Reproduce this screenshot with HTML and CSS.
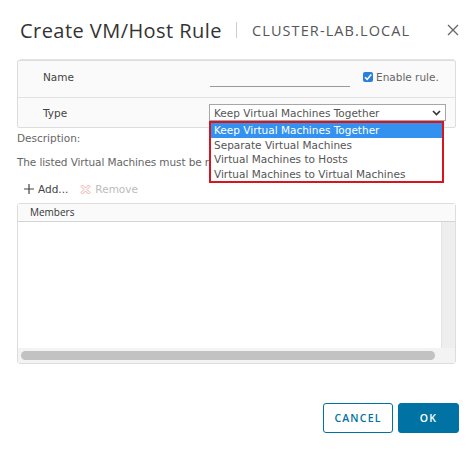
FILE: index.html
```html
<!DOCTYPE html>
<html lang="en">
<head>
  <meta charset="UTF-8">
  <title>Create VM/Host Rule</title>
  <link rel="stylesheet" href="styles.css">
</head>
<body>

<div class="dialog">
  <div class="header">
    <h2 class="title">Create VM/Host Rule</h2>
    <span class="divider"></span>
    <span class="cluster">CLUSTER-LAB.LOCAL</span>
    <svg class="close" width="12" height="12" viewBox="0 0 12 12"><path d="M1 1 L11 11 M11 1 L1 11" stroke="#666" stroke-width="1.3" fill="none"/></svg>
  </div>

  <div class="form-box">
    <div class="row row-name">
      <div class="label">Name</div>
      <div class="value">
        <div class="name-input"></div>
        <label class="enable"><span class="check"><svg width="10" height="10" viewBox="0 0 10 10"><path d="M2 5.2 L4.2 7.4 L8.2 2.6" stroke="#fff" stroke-width="1.6" fill="none"/></svg></span>Enable rule.</label>
      </div>
    </div>
    <div class="row row-type">
      <div class="label">Type</div>
      <div class="value">
        <div class="select-wrap">
          <div class="select">
            <span>Keep Virtual Machines Together</span>
            <svg width="9" height="6" viewBox="0 0 9 6"><path d="M1 1 L4.5 4.5 L8 1" stroke="#333" stroke-width="1.6" fill="none"/></svg>
          </div>
          <ul class="options">
            <li class="selected">Keep Virtual Machines Together</li>
            <li>Separate Virtual Machines</li>
            <li>Virtual Machines to Hosts</li>
            <li>Virtual Machines to Virtual Machines</li>
          </ul>
        </div>
      </div>
    </div>
  </div>

  <p class="desc">Description:</p>
  <p class="desc desc-text">The listed Virtual Machines must be run on the same host.</p>

  <div class="actions">
    <span class="action"><svg width="10" height="10" viewBox="0 0 10 10"><path d="M5 0 V10 M0 5 H10" stroke="#444" stroke-width="1.2"/></svg>Add...</span>
    <span class="action disabled"><svg width="11" height="11" viewBox="0 0 11 11"><path d="M1 2.5 L2.5 1 L5.5 4 L8.5 1 L10 2.5 L7 5.5 L10 8.5 L8.5 10 L5.5 7 L2.5 10 L1 8.5 L4 5.5 Z" stroke="#f0a8a8" stroke-width="1" fill="none"/></svg>Remove</span>
  </div>

  <div class="members">
    <div class="members-head">Members</div>
    <div class="members-body">
      <div class="list"></div>
      <div class="vscroll"></div>
    </div>
    <div class="hscroll"><div class="thumb"></div></div>
  </div>

  <div class="footer">
    <button class="btn btn-outline">CANCEL</button>
    <button class="btn btn-primary">OK</button>
  </div>
</div>

</body>
</html>
```

FILE: styles.css
```css
body { margin: 0; background: #fff; font-family: "DejaVu Sans", Verdana, sans-serif; color: #555; }
.dialog { width: 439px; padding: 0 18px 0 17px; }

.header { display: flex; align-items: center; height: 58px; margin: 0 2px 0 3px; border-bottom: 1px solid #e3e3e3; padding-top: 1px; }
.title { margin: 0; font-family: "Open Sans", sans-serif; font-weight: 400; font-size: 20px; color: #333; letter-spacing: 0.45px; }
.divider { width: 1px; height: 16px; background: #ccc; margin: 0 15px 0 14px; }
.cluster { font-family: "Open Sans", sans-serif; font-size: 14.5px; color: #565656; letter-spacing: 1.1px; flex: 1; }
.close { margin-right: -5px; }

.form-box { border: 1px solid #ddd; background: #fafafa; border-radius: 2px; }
.row { display: flex; align-items: center; }
.row-name { height: 36px; border-bottom: 1px solid #e2e2e2; }
.row-name .label { padding-bottom: 5px; }
.row-type { height: 29px; }
.label { width: 167px; padding-left: 25px; font-size: 10.5px; color: #444; }
.value { flex: 1; display: flex; align-items: center; }
.name-input { width: 140px; height: 8px; border-bottom: 1px solid #999; margin-top: 6px; }
.enable { display: flex; align-items: center; margin-left: 13px; font-size: 10.5px; color: #666; margin-bottom: 4px; }
.check { width: 10px; height: 10px; background: #2a7de1; border-radius: 2px; margin-right: 3px; display: flex; }

.select-wrap { position: relative; margin-left: -1px; }
.select { width: 227px; height: 15px; border: 1px solid #a6a6a6; background: #fff; display: flex; align-items: center; justify-content: space-between; padding: 0 4px 0 4px; font-size: 10.5px; color: #555; }
.options { position: absolute; top: 17px; left: 0; width: 231px; margin: 0; padding: 0; list-style: none; border: 2px solid #d9141c; background: #fff; font-size: 10.5px; color: #555; }
.options li { height: 14.5px; line-height: 14.5px; padding-left: 3px; }
.options li.selected { background: #3392f0; color: #fff; }

.desc { margin: 3px 0 0 0; font-size: 10.5px; line-height: 14px; color: #666; }
.desc-text { margin-top: 10px; white-space: nowrap; letter-spacing: -0.1px; }

.actions { display: flex; align-items: center; margin-top: 13px; height: 14px; padding-left: 7px; font-size: 10.5px; }
.action { display: flex; align-items: center; gap: 4px; color: #444; margin-right: 12px; }
.action.disabled { color: #bbb; }

.members { margin-top: 7px; border: 1px solid #ddd; border-radius: 3px; height: 159px; display: flex; flex-direction: column; }
.members-head { height: 17px; line-height: 17px; background: #fafafa; border-bottom: 1px solid #d4d4d4; padding-left: 12px; font-family: "Open Sans", sans-serif; font-size: 10px; color: #333; }
.members-body { flex: 1; display: flex; }
.list { flex: 1; }
.vscroll { width: 13px; background: #eeeeee; border-left: 1px solid #e4e4e4; }
.hscroll { height: 15px; background: #f3f3f3; display: flex; align-items: center; padding: 0 20px 0 3px; }
.thumb { flex: 1; height: 9px; border-radius: 5px; background: #c2c2c2; }

.footer { display: flex; justify-content: flex-end; gap: 5px; margin: 39px -3px 0 0; }
.btn { font-family: "Open Sans", sans-serif; font-weight: 600; font-size: 10.5px; letter-spacing: 1.2px; height: 30px; border-radius: 3px; cursor: pointer; }
.btn-outline { width: 70px; background: #fff; color: #0072a3; border: 1px solid #0072a3; }
.btn-primary { width: 61px; background: #0072a3; color: #fff; border: 1px solid #0072a3; }
```
